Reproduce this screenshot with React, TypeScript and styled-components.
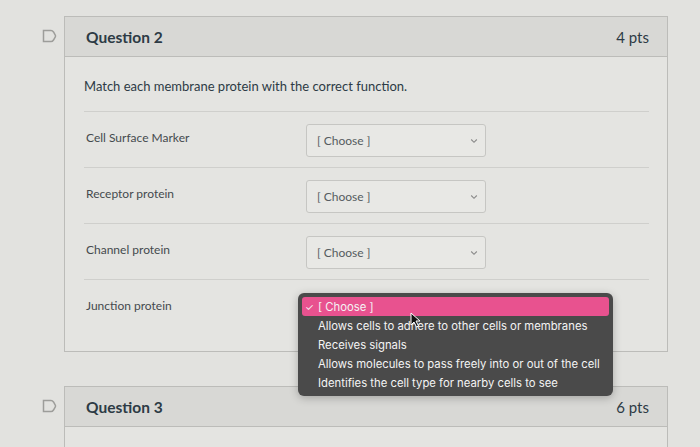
import React from 'react';
import styled, { createGlobalStyle } from 'styled-components';

const pageBg = '#e2e2df';
const headerBg = '#d8d8d5';
const bodyBg = '#e4e4e1';
const borderColor = '#bcbcb9';
const textColor = '#2d3b45';
const labelColor = '#444a4e';
const menuBg = '#4a4a4a';
const menuHighlight = '#e8528f';

const GlobalStyle = createGlobalStyle`
  html, body {
    margin: 0;
    padding: 0;
    background: ${pageBg};
    font-family: Lato, "Open Sans", sans-serif;
  }
`;

const Page = styled.div`
  display: flex;
  flex-direction: column;
  gap: 34px;
  padding: 16px 32px 0 42px;
  height: 447px;
  box-sizing: border-box;
  overflow: hidden;
`;

const QuestionRow = styled.div`
  display: flex;
  align-items: flex-start;
  gap: 7px;
`;

const MarkerCol = styled.div`
  width: 15px;
  padding-top: 13px;
  flex-shrink: 0;
  display: flex;
`;

const Card = styled.div`
  flex: 1;
  border: 1px solid ${borderColor};
  background: ${bodyBg};
`;

const CardHeader = styled.div`
  display: flex;
  align-items: center;
  justify-content: space-between;
  height: 39px;
  padding: 0 18px 0 21px;
  background: ${headerBg};
  border-bottom: 1px solid ${borderColor};
`;

const Title = styled.h2`
  margin: 0;
  font-size: 15.5px;
  font-weight: 700;
  color: ${textColor};
`;

const Points = styled.span`
  font-size: 15px;
  font-weight: 400;
  color: ${textColor};
`;

const CardBody = styled.div<{ $empty?: boolean }>`
  padding: ${({ $empty }) => ($empty ? '0' : '20px 18px 16px 19px')};
  min-height: ${({ $empty }) => ($empty ? '40px' : '0')};
`;

const Prompt = styled.p`
  margin: 0 0 16px;
  font-size: 13px;
  line-height: 18px;
  color: ${textColor};
`;

const MatchRow = styled.div`
  display: flex;
  align-items: flex-start;
  height: 56px;
  box-sizing: border-box;
  border-top: 1px solid #cfcfcc;
`;

const Label = styled.div`
  width: 220px;
  padding: 19px 0 0 2px;
  font-size: 12px;
  line-height: 14px;
  color: ${labelColor};
`;

const SelectWrap = styled.div`
  position: relative;
  margin-top: 12px;
`;

const SelectBox = styled.div`
  width: 180px;
  height: 33px;
  box-sizing: border-box;
  display: flex;
  align-items: center;
  justify-content: space-between;
  padding: 0 7px 0 10px;
  background: #e8e8e5;
  border: 1px solid #c6c6c3;
  border-radius: 3px;
  font-size: 12px;
  color: #555c60;
`;

const Menu = styled.div`
  position: absolute;
  left: -8px;
  top: 1px;
  width: 315px;
  padding: 4px;
  box-sizing: border-box;
  background: ${menuBg};
  border-radius: 6px;
  box-shadow: 0 2px 8px rgba(0, 0, 0, 0.25);
  z-index: 5;
  font-family: Inter, "Liberation Sans", sans-serif;
`;

const MenuItem = styled.div<{ $active?: boolean }>`
  display: flex;
  align-items: center;
  height: 19px;
  padding-left: ${({ $active }) => ($active ? '3px' : '16px')};
  gap: 4px;
  border-radius: 3px;
  background: ${({ $active }) => ($active ? menuHighlight : 'transparent')};
  color: #f4f4f4;
  font-size: 11.3px;
  white-space: nowrap;
`;

const Check = styled.span`
  width: 9px;
  font-size: 10px;
`;

const Cursor = styled.svg`
  position: absolute;
  left: 104px;
  top: 20px;
  z-index: 6;
`;

const Marker = () => (
  <svg width="15" height="14" viewBox="0 0 15 14">
    <path
      d="M1.5 1.5 H9 Q10.5 1.5 11.5 3 L13.3 6.2 Q13.8 7 13.3 7.8 L11.5 11 Q10.5 12.5 9 12.5 H1.5 Z"
      fill="none"
      stroke="#9d9d9a"
      strokeWidth="1.5"
    />
  </svg>
);

const Chevron = () => (
  <svg width="8" height="6" viewBox="0 0 8 6">
    <path d="M1.2 1.5 L4 4.3 L6.8 1.5" fill="none" stroke="#8a8a8a" strokeWidth="1.1" />
  </svg>
);

const rows = ['Cell Surface Marker', 'Receptor protein', 'Channel protein', 'Junction protein'];

const options = [
  'Allows cells to adhere to other cells or membranes',
  'Receives signals',
  'Allows molecules to pass freely into or out of the cell',
  'Identifies the cell type for nearby cells to see',
];

const App: React.FC = () => {
  return (
    <>
      <GlobalStyle />
      <Page>
        <QuestionRow>
          <MarkerCol>
            <Marker />
          </MarkerCol>
          <Card>
            <CardHeader>
              <Title>Question 2</Title>
              <Points>4 pts</Points>
            </CardHeader>
            <CardBody>
              <Prompt>Match each membrane protein with the correct function.</Prompt>
              {rows.map((row, i) => {
                const open = i === rows.length - 1;
                return (
                  <MatchRow key={row}>
                    <Label>{row}</Label>
                    <SelectWrap>
                      {open ? (
                        <>
                          <Menu>
                            <MenuItem $active>
                              <Check>✓</Check>
                              <span>[ Choose ]</span>
                            </MenuItem>
                            {options.map(opt => (
                              <MenuItem key={opt}>{opt}</MenuItem>
                            ))}
                          </Menu>
                          <Cursor width="11" height="16" viewBox="0 0 11 16">
                            <path
                              d="M1 1 L1 13 L4 10 L6.5 15 L8.5 14 L6 9 L10 9 Z"
                              fill="#111"
                              stroke="#fff"
                              strokeWidth="1"
                            />
                          </Cursor>
                        </>
                      ) : (
                        <SelectBox>
                          <span>[ Choose ]</span>
                          <Chevron />
                        </SelectBox>
                      )}
                    </SelectWrap>
                  </MatchRow>
                );
              })}
            </CardBody>
          </Card>
        </QuestionRow>
        <QuestionRow>
          <MarkerCol>
            <Marker />
          </MarkerCol>
          <Card>
            <CardHeader>
              <Title>Question 3</Title>
              <Points>6 pts</Points>
            </CardHeader>
            <CardBody $empty />
          </Card>
        </QuestionRow>
      </Page>
    </>
  );
};

export default App;
